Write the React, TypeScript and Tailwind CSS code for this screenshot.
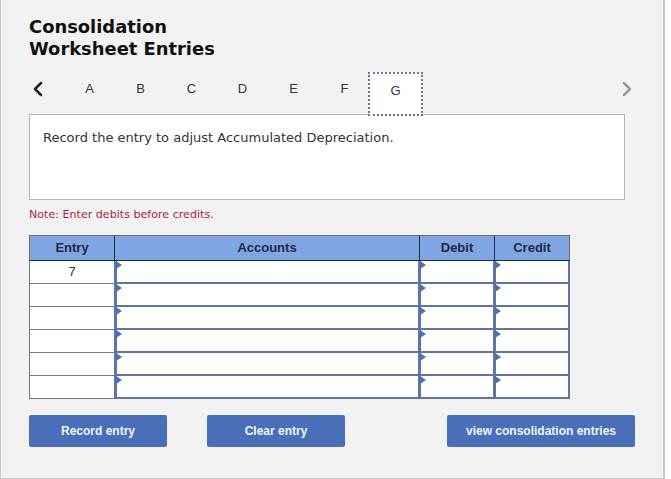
import { ChevronLeft, ChevronRight } from "lucide-react";

const TABS = ["A", "B", "C", "D", "E", "F", "G"];
const ROWS = ["7", "", "", "", "", ""];

function InputCell({ className }: { className: string }) {
  return (
    <div className={`relative h-[23px] border-b-2 border-l-[3px] border-[#5f76a3] bg-white ${className}`}>
      <span className="absolute left-[-1px] top-0 h-0 w-0 border-y-[4px] border-l-[6px] border-y-transparent border-l-[#4a6fb5]" />
    </div>
  );
}

export default function App() {
  return (
    <div className="h-[479px] w-[671px] bg-white font-['Liberation_Sans',sans-serif]">
      <div className="h-[479px] w-[665px] border-b border-l border-r-2 border-[#c8c8c8] bg-[#f2f2f2] pl-[28px] pt-[16px]">
        <h1 className="font-['DejaVu_Sans',sans-serif] text-[17.9px] font-bold leading-[22px] text-[#111]">
          Consolidation
          <br />
          Worksheet Entries
        </h1>

        <div className="mt-[12px] flex h-[44px] w-[610px] items-start">
          <ChevronLeft className="ml-[-3px] mt-[5px] h-[24px] w-[24px] text-[#222]" strokeWidth={2.5} />
          <div className="ml-[14px] flex items-start">
            {TABS.map((t) =>
              t === "G" ? (
                <div
                  key={t}
                  className="ml-[-2px] flex h-[44px] w-[55px] items-center justify-center border-2 border-dotted border-[#5f76a3] bg-white pb-[6px] text-[13px] text-[#333]"
                >
                  {t}
                </div>
              ) : (
                <div key={t} className="flex h-[34px] w-[51px] items-center justify-center text-[13px] text-[#333]">
                  {t}
                </div>
              ),
            )}
          </div>
          <ChevronRight className="ml-auto mt-[5px] h-[24px] w-[24px] text-[#9a9a9a]" strokeWidth={2.5} />
        </div>

        <div className="mt-[-2px] h-[86px] w-[596px] border border-[#b5b5b5] bg-white pl-[13px] pt-[14px] font-['DejaVu_Sans',sans-serif] text-[13px] leading-[18px] text-[#333]">
          Record the entry to adjust Accumulated Depreciation.
        </div>

        <p className="mt-[8px] font-['DejaVu_Sans',sans-serif] text-[11.1px] leading-[14px] text-[#b01c3f]">
          Note: Enter debits before credits.
        </p>

        <div className="mt-[13px] w-[541px]">
          <div className="flex h-[26px] border border-[#6d6d6d] border-b-[#1f2a44] bg-[#7fa6e3] text-[13px] font-bold leading-[23px] text-[#1f2a44]">
            <div className="w-[85px] border-r border-[#1f2a44] text-center">Entry</div>
            <div className="w-[305px] border-r border-[#1f2a44] text-center">Accounts</div>
            <div className="w-[75px] border-r border-[#1f2a44] text-center">Debit</div>
            <div className="flex-1 text-center">Credit</div>
          </div>
          {ROWS.map((entry, i) => (
            <div key={i} className="flex">
              <div className="h-[23px] w-[85px] border-b border-l border-[#7a7a7a] bg-white text-center text-[13px] leading-[21px] text-[#333]">
                {entry}
              </div>
              <InputCell className="w-[304px]" />
              <InputCell className="w-[75px]" />
              <InputCell className="w-[77px] border-r-2" />
            </div>
          ))}
        </div>

        <div className="mt-[16px] flex w-[606px]">
          <button className="h-[32px] w-[138px] rounded-[2px] bg-[#4a6fb8] text-[12px] font-bold text-[#f2f5fb]">
            Record entry
          </button>
          <button className="ml-[40px] h-[32px] w-[138px] rounded-[2px] bg-[#4a6fb8] text-[12px] font-bold text-[#f2f5fb]">
            Clear entry
          </button>
          <button className="ml-auto h-[32px] w-[188px] rounded-[2px] bg-[#4a6fb8] text-[12px] font-bold text-[#f2f5fb]">
            view consolidation entries
          </button>
        </div>
      </div>
    </div>
  );
}
